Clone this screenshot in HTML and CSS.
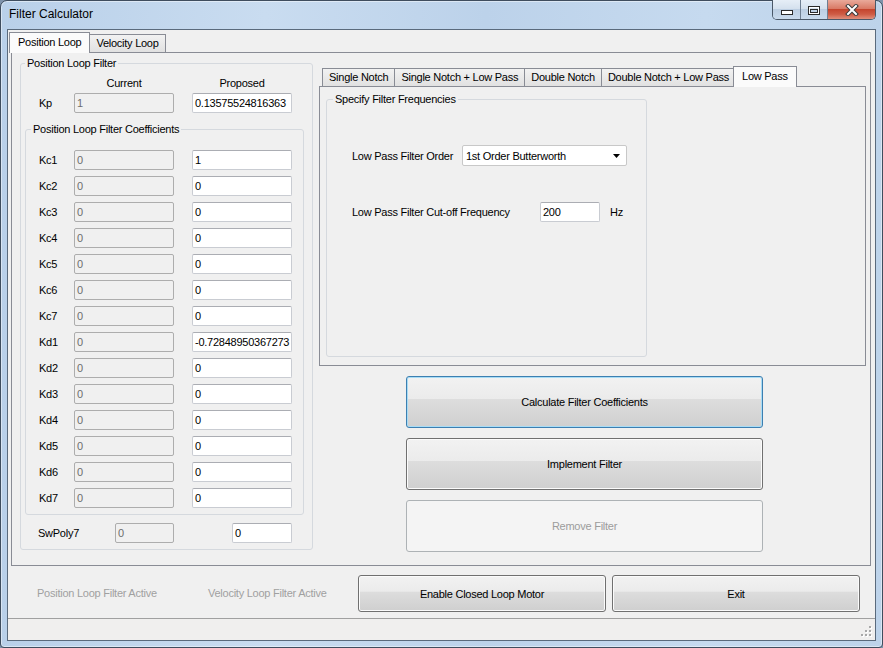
FILE: index.html
```html
<!DOCTYPE html>
<html lang="en">
<head>
  <meta charset="UTF-8">
  <title>Filter Calculator</title>
  <link rel="stylesheet" href="styles.css">
</head>
<body>
<div class="window">
  <div class="titlebar">
    <span class="title">Filter Calculator</span>
    <div class="caption">
      <div class="cbtn min">
        <svg width="12" height="5" viewBox="0 0 12 5"><rect x="0.5" y="0.5" width="11" height="4" fill="#fff" stroke="#2b2b2b"/></svg>
      </div>
      <div class="cbtn max">
        <svg width="12" height="9" viewBox="0 0 12 9">
          <rect x="0.5" y="0.5" width="11" height="8" fill="none" stroke="#2b2b2b"/>
          <rect x="1.5" y="1.5" width="9" height="6" fill="none" stroke="#fff"/>
          <rect x="2.5" y="3.5" width="7" height="3" fill="none" stroke="#2b2b2b"/>
        </svg>
      </div>
      <div class="cbtn close">
        <svg width="14" height="12" viewBox="0 0 14 12">
          <path d="M3 2 L11 10 M11 2 L3 10" stroke="#3b3b3b" stroke-width="4" stroke-linecap="square"/>
          <path d="M3 2 L11 10 M11 2 L3 10" stroke="#fff" stroke-width="2" stroke-linecap="square"/>
        </svg>
      </div>
    </div>
  </div>

  <div class="client">
    <div class="tabctl main-tabs">
      <div class="tabstrip">
        <div class="tab active">Position Loop</div>
        <div class="tab">Velocity Loop</div>
      </div>
      <div class="page main-page">

        <fieldset class="group loop-group">
          <legend>Position Loop Filter</legend>
          <div class="grid heads"><span></span><span>Current</span><span>Proposed</span></div>
          <div class="grid kp-row">
            <span>Kp</span>
            <div class="tb off">1</div>
            <div class="tb">0.13575524816363</div>
          </div>

          <fieldset class="group coeff-group">
            <legend>Position Loop Filter Coefficients</legend>
            <div class="grid coeffs">
              <span>Kc1</span><div class="tb off">0</div><div class="tb">1</div>
              <span>Kc2</span><div class="tb off">0</div><div class="tb">0</div>
              <span>Kc3</span><div class="tb off">0</div><div class="tb">0</div>
              <span>Kc4</span><div class="tb off">0</div><div class="tb">0</div>
              <span>Kc5</span><div class="tb off">0</div><div class="tb">0</div>
              <span>Kc6</span><div class="tb off">0</div><div class="tb">0</div>
              <span>Kc7</span><div class="tb off">0</div><div class="tb">0</div>
              <span>Kd1</span><div class="tb off">0</div><div class="tb">-0.72848950367273</div>
              <span>Kd2</span><div class="tb off">0</div><div class="tb">0</div>
              <span>Kd3</span><div class="tb off">0</div><div class="tb">0</div>
              <span>Kd4</span><div class="tb off">0</div><div class="tb">0</div>
              <span>Kd5</span><div class="tb off">0</div><div class="tb">0</div>
              <span>Kd6</span><div class="tb off">0</div><div class="tb">0</div>
              <span>Kd7</span><div class="tb off">0</div><div class="tb">0</div>
            </div>
          </fieldset>

          <div class="grid sw-row">
            <span>SwPoly7</span>
            <div class="tb off">0</div>
            <div class="tb">0</div>
          </div>
        </fieldset>

        <div class="right-col">
          <div class="tabctl filter-tabs">
            <div class="tabstrip">
              <div class="tab">Single Notch</div>
              <div class="tab">Single Notch + Low Pass</div>
              <div class="tab">Double Notch</div>
              <div class="tab">Double Notch + Low Pass</div>
              <div class="tab active">Low Pass</div>
            </div>
            <div class="page filter-page">
              <fieldset class="group freq-group">
                <legend>Specify Filter Frequencies</legend>
                <div class="freq-row order-row">
                  <span>Low Pass Filter Order</span>
                  <div class="combo">
                    <span>1st Order Butterworth</span>
                    <svg width="7" height="4" viewBox="0 0 7 4"><polygon points="0,0 7,0 3.5,4" fill="#000"/></svg>
                  </div>
                </div>
                <div class="freq-row cutoff-row">
                  <span>Low Pass Filter Cut-off Frequency</span>
                  <div class="tb">200</div>
                  <span>Hz</span>
                </div>
              </fieldset>
            </div>
          </div>

          <div class="actions">
            <button class="btn focus">Calculate Filter Coefficients</button>
            <button class="btn">Implement Filter</button>
            <button class="btn off">Remove Filter</button>
          </div>
        </div>

      </div>
    </div>

    <div class="bottom-bar">
      <span class="status-label first">Position Loop Filter Active</span>
      <span class="status-label second">Velocity Loop Filter Active</span>
      <button class="btn wide">Enable Closed Loop Motor</button>
      <button class="btn wide">Exit</button>
    </div>

    <div class="statusbar">
      <svg class="grip" width="12" height="12" viewBox="0 0 12 12">
        <g fill="#fff">
          <rect x="9" y="1" width="2" height="2"/>
          <rect x="5" y="5" width="2" height="2"/><rect x="9" y="5" width="2" height="2"/>
          <rect x="1" y="9" width="2" height="2"/><rect x="5" y="9" width="2" height="2"/><rect x="9" y="9" width="2" height="2"/>
        </g>
        <g fill="#a8a8a8">
          <rect x="8" y="0" width="2" height="2"/>
          <rect x="4" y="4" width="2" height="2"/><rect x="8" y="4" width="2" height="2"/>
          <rect x="0" y="8" width="2" height="2"/><rect x="4" y="8" width="2" height="2"/><rect x="8" y="8" width="2" height="2"/>
        </g>
      </svg>
    </div>
  </div>
</div>
</body>
</html>
```

FILE: styles.css
```css
* { box-sizing: border-box; }

body {
  margin: 0;
  width: 883px;
  height: 648px;
  overflow: hidden;
  font-family: "Liberation Sans", Arial, sans-serif;
  font-size: 11px;
  letter-spacing: -0.25px;
  color: #000;
  background: #7f93ab;
}

/* window frame */
.window {
  width: 883px;
  height: 648px;
  display: flex;
  flex-direction: column;
  padding: 0 6px 6px 6px;
  border: 1px solid #3f4d5e;
  border-radius: 7px 7px 4px 4px;
  background: linear-gradient(90deg, #b9d0e9 0%, #c9dcf0 30%, #bcd2ea 55%, #c6daef 80%, #bdd3ea 100%);
  box-shadow: inset 0 0 0 1px rgba(255, 255, 255, 0.45);
}

.titlebar {
  height: 28px;
  display: flex;
  justify-content: space-between;
  align-items: flex-start;
}

.title {
  margin: 6px 0 0 2px;
  font-size: 12px;
  line-height: 15px;
  letter-spacing: 0;
}

.caption {
  display: flex;
  height: 20px;
  margin-top: -1px;
  border: 1px solid #4a5868;
  border-top: none;
  border-radius: 0 0 5px 5px;
  overflow: hidden;
}

.cbtn {
  display: flex;
  align-items: center;
  justify-content: center;
  height: 100%;
}

.cbtn.min,
.cbtn.max {
  width: 28px;
  border-right: 1px solid #6f7f92;
  background: linear-gradient(#e6eef7 0%, #d5e1ee 45%, #bccee2 50%, #c9daec 100%);
}

.cbtn.max { width: 27px; }
.cbtn.min svg { margin-top: 6px; }
.cbtn.max svg { margin-top: 1px; }

.cbtn.close {
  width: 47px;
  background: linear-gradient(#e9a99a 0%, #d97a66 45%, #c4452e 50%, #cf5c45 75%, #e08f7b 100%);
}

.client {
  flex: 1;
  display: flex;
  flex-direction: column;
  background: #f0f0f0;
  border: 1px solid #5a6a7c;
}

/* tab controls */
.tabstrip {
  display: flex;
  align-items: flex-end;
}

.tab {
  height: 18px;
  padding: 0 6px;
  margin-right: -1px;
  line-height: 17px;
  white-space: nowrap;
  border: 1px solid #898c95;
  border-bottom: none;
  background: linear-gradient(#f2f2f2, #e1e1e1);
}

.tab.active {
  position: relative;
  z-index: 1;
  height: 21px;
  margin: 0 -1px -1px -2px;
  padding: 0 8px;
  line-height: 18px;
  background: #fbfbfb;
}

.page {
  border: 1px solid #898c95;
  background: #f0f0f0;
}

.main-tabs {
  height: 536px;
  margin: 0 4px 0 3px;
}

.main-tabs .tabstrip { height: 22px; }

.main-page {
  height: 514px;
  display: flex;
  align-items: flex-start;
  padding: 4px 0 0 8px;
}

/* group boxes */
.group {
  margin: 0;
  padding: 0;
  min-width: 0;
  border: 1px solid #d5d9de;
  border-radius: 3px;
}

.group legend {
  padding: 0 2px;
  line-height: 13px;
}

.grid {
  display: grid;
  align-items: center;
}

.loop-group {
  width: 293px;
  padding-bottom: 6px;
}

.loop-group > legend { margin-left: 4px; }

.heads,
.kp-row,
.coeffs {
  grid-template-columns: 35px 118px 100px;
  padding-left: 18px;
}

.kp-row .tb,
.coeffs .tb { width: 100px; }

.heads {
  margin-top: 7px;
  line-height: 13px;
  text-align: center;
}

.heads span:nth-child(2) { width: 100px; }

.kp-row { margin-top: 3px; }

.coeff-group {
  width: 279px;
  margin: 10px 0 0 4px;
  padding: 14px 0 6px 0;
}

.coeff-group > legend { margin-left: 5px; }

.coeffs {
  row-gap: 6px;
  padding-left: 13px;
}

.sw-row {
  margin-top: 8px;
  padding-left: 17px;
  grid-template-columns: 77px 117px 60px;
}

.sw-row .tb.off { width: 59px; }

.tb {
  height: 20px;
  padding: 0 0 0 2px;
  line-height: 18px;
  white-space: nowrap;
  overflow: hidden;
  background: #fff;
  border: 1px solid #c9ccd2;
  border-top-color: #abadb3;
  border-radius: 2px;
}

.tb.off {
  color: #6d6d6d;
  background: #f0f0f0;
  border-color: #adadad;
}

/* right side */
.right-col {
  width: 547px;
  margin: 9px 0 0 6px;
}

.filter-tabs .tabstrip {
  height: 20px;
  padding-left: 3px;
}

.filter-page {
  height: 280px;
  padding: 6px 0 0 6px;
}

.freq-group {
  width: 321px;
  height: 264px;
}

.freq-group > legend { margin-left: 6px; }

.freq-row {
  display: flex;
  align-items: center;
  padding-left: 25px;
}

.order-row { margin-top: 39px; }
.order-row > span { width: 110px; }

.combo {
  width: 165px;
  height: 21px;
  display: flex;
  align-items: center;
  justify-content: space-between;
  padding: 0 6px 0 3px;
  background: #fff;
  border: 1px solid #c8c8c8;
  border-radius: 2px;
}

.cutoff-row { margin-top: 36px; }
.cutoff-row > span:first-child { width: 188px; }
.cutoff-row .tb { width: 60px; margin-right: 10px; }

.actions {
  display: flex;
  flex-direction: column;
  gap: 10px;
  margin: 10px 0 0 87px;
}

.btn {
  font: inherit;
  letter-spacing: inherit;
  color: #000;
  padding: 0;
  width: 357px;
  height: 52px;
  border: 1px solid #707070;
  border-radius: 3px;
  background: linear-gradient(#f2f2f2 0%, #ebebeb 44%, #dddddd 45%, #cfcfcf 100%);
  box-shadow: inset 0 0 0 1px #fbfbfb;
}

.btn.focus {
  border-color: #3c7fb1;
  box-shadow: inset 0 0 0 1px #a8dcf5;
}

.btn.off {
  color: #9c9c9c;
  border-color: #adb2b5;
  background: #f4f4f4;
  box-shadow: none;
}

/* bottom bar */
.bottom-bar {
  height: 52px;
  display: flex;
  align-items: flex-start;
  padding: 9px 0 0 29px;
}

.status-label {
  color: #a0a0a0;
  line-height: 37px;
}

.status-label.first { width: 171px; }
.status-label.second { width: 150px; }

.btn.wide {
  width: 248px;
  height: 37px;
  margin-right: 6px;
}

.statusbar {
  flex: 1;
  display: flex;
  justify-content: flex-end;
  align-items: flex-end;
  padding: 0 2px 2px 0;
  border-top: 1px solid #a0a0a0;
  background: #f0efee;
}
```
